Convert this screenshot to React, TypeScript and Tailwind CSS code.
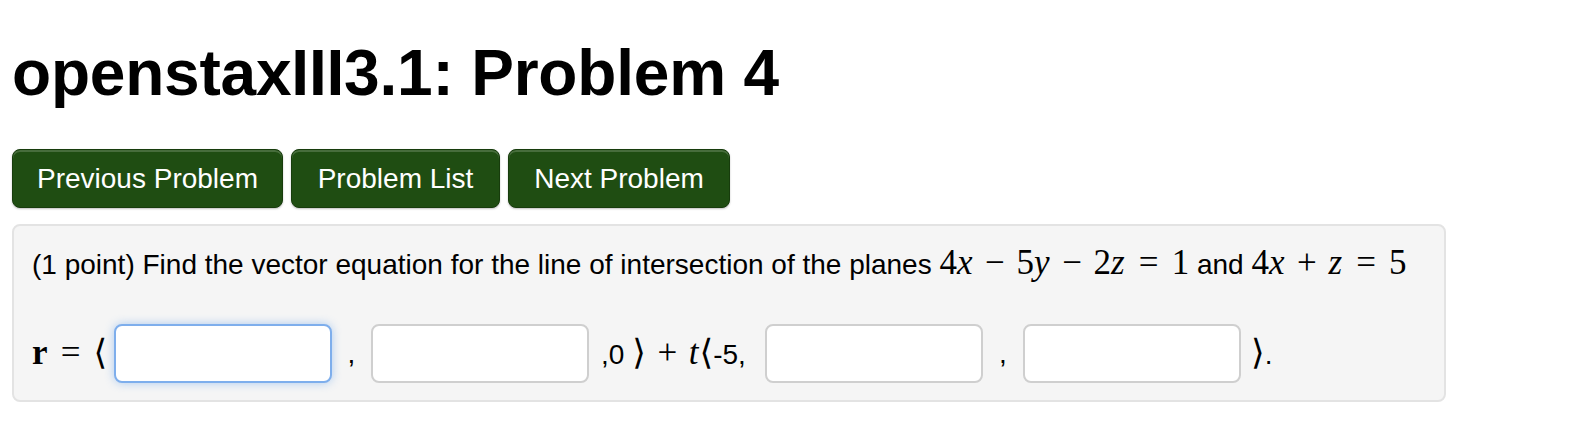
const sans = "font-['Liberation_Sans',Arial,sans-serif]";
const serif = "font-['Liberation_Serif','DejaVu_Serif',serif]";

const NavButton = ({ label, width }: { label: string; width: string }) => (
  <button
    className={`${width} h-[59px] rounded-[8px] border border-[#173c0c] bg-[#1f4d12] text-white text-[28px] leading-none text-center shadow-[inset_0_2px_0_rgba(255,255,255,0.18),0_1px_2px_rgba(0,0,0,0.25)] ${sans}`}
  >
    {label}
  </button>
);

const Op = ({ children, eq }: { children: string; eq?: boolean }) => (
  <span className={`inline-block text-center ${eq ? "w-[46px]" : "w-[43px]"}`}>
    {children}
  </span>
);

const Var = ({ children }: { children: string }) => (
  <i className="italic pr-[1px]">{children}</i>
);

const Blank = ({ focused }: { focused?: boolean }) => (
  <input
    type="text"
    className={`w-[218px] h-[59px] rounded-[8px] bg-white border-2 outline-none ${
      focused
        ? "border-[#7eaeec] shadow-[0_0_10px_rgba(82,150,236,0.45)]"
        : "border-[#cfcfcf]"
    }`}
  />
);

const App = () => (
  <div className={`bg-white min-h-[448px] pl-[12px] text-black ${sans}`}>
    <h1 className="pt-[38px] text-[64px] leading-[70px] font-bold tracking-[-0.2px]">
      openstaxIII3.1: Problem 4
    </h1>

    <div className="mt-[41px] flex gap-[8px]">
      <NavButton label="Previous Problem" width="w-[271px]" />
      <NavButton label="Problem List" width="w-[209px]" />
      <NavButton label="Next Problem" width="w-[222px]" />
    </div>

    <div className="mt-[16px] w-[1434px] rounded-[8px] border-2 border-[#e3e3e3] bg-[#f5f5f5] pl-[18px] pt-[17px] pb-[17px]">
      <div className="text-[28px] leading-[40px] whitespace-nowrap">
        (1 point) Find the vector equation for the line of intersection of the planes{" "}
        <span className={`${serif} text-[35px]`}>
          4<Var>x</Var>
          <Op>−</Op>5<Var>y</Var>
          <Op>−</Op>2<Var>z</Var>
          <Op eq>=</Op>1
        </span>{" "}
        and{" "}
        <span className={`${serif} text-[35px]`}>
          4<Var>x</Var>
          <Op>+</Op>
          <Var>z</Var>
          <Op eq>=</Op>5
        </span>
      </div>

      <div className="mt-[39px] flex items-center text-[28px] whitespace-nowrap">
        <span className={`w-[82px] ${serif} text-[35px]`}>
          <b className="font-bold">r</b>
          <Op eq>=</Op>⟨
        </span>
        <Blank focused />
        <span className="w-[39px] text-center">,</span>
        <Blank />
        <span className="w-[176px] pl-[12px]">
          ,0 <span className={`${serif} text-[35px]`}>⟩</span>
          <span className={`${serif} text-[35px]`}>
            <Op>+</Op>
            <Var>t</Var>⟨
          </span>
          -5,
        </span>
        <Blank />
        <span className="w-[40px] text-center">,</span>
        <Blank />
        <span className="ml-[10px]">
          <span className={`${serif} text-[35px]`}>⟩</span>.
        </span>
      </div>
    </div>
  </div>
);

export default App;
